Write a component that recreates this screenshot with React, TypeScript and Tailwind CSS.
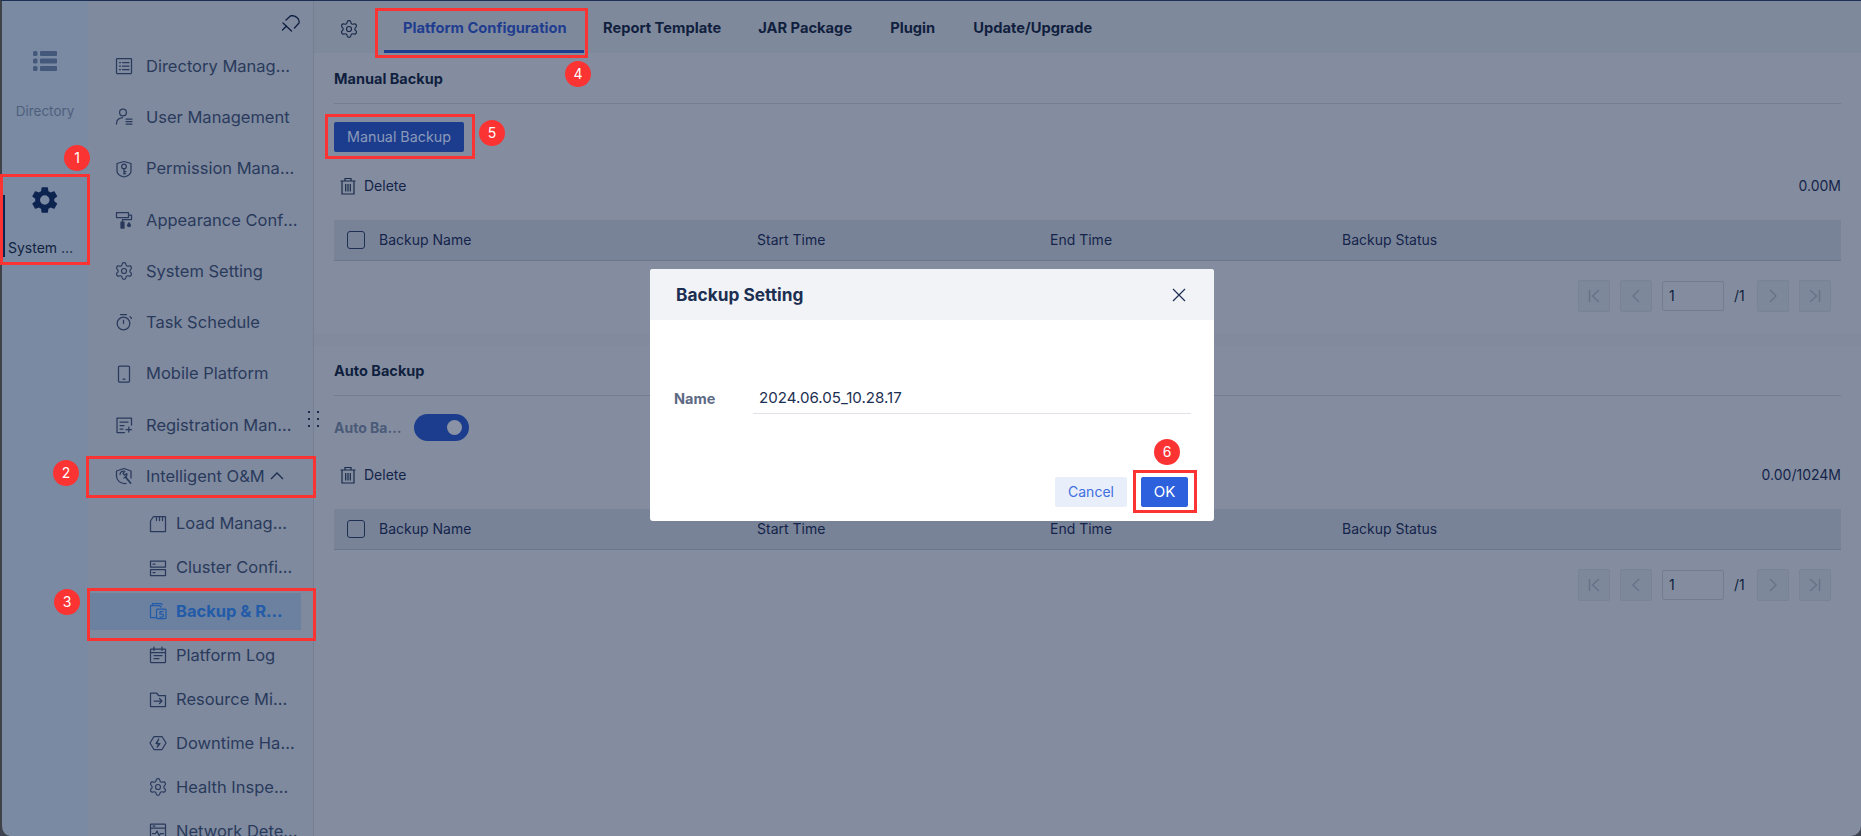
import React from 'react';
import { Settings } from 'lucide-react';

type IconProps = { className?: string };

const Svg: React.FC<{ className?: string; size?: number; children: React.ReactNode }> = ({ className, size = 18, children }) => (
    <svg width={size} height={size} viewBox="0 0 18 18" fill="none" stroke="currentColor" strokeWidth="1.25" strokeLinecap="round" strokeLinejoin="round" className={className}>
        {children}
    </svg>
);

const DirectoryIcon = () => (
    <Svg><rect x="1.500" y="1.500" width="15" height="15" rx="0.5" /><path d="M4.500 5.500h1M7.500 5.500h6.500M4.500 9h1M7.500 9h6.500M4.500 12.500h1M7.500 12.500h6.500" /></Svg>
);
const UserIcon = () => (
    <Svg><circle cx="8" cy="4.500" r="3.400" /><path d="M1.500 16c0-3.400 2.200-6 6-6.300M11 11h6M11 13.500h6M11 16h6" /></Svg>
);
const PermissionIcon = () => (
    <Svg><path d="M9 1.500l7 2v7.500c0 2.500-3 5-7 6-4-1-7-3.500-7-6V3.500z" /><circle cx="9" cy="6.500" r="2.300" /><path d="M9 9v5M9 11.500h2M9 13.500h1.500" /></Svg>
);
const AppearanceIcon = () => (
    <Svg><path d="M1.500 1.500h12v5h-12zM13.500 4h3v4.500H7.500V11" /><path d="M6 11h3v6H6z" fill="currentColor" /><path d="M14 11c1.500 1.700 2 2.500 2 3.200a2 2 0 0 1-4 0c0-.7.500-1.500 2-3.200z" fill="currentColor" stroke="none" /></Svg>
);
const GearIcon = () => <Settings size={20} strokeWidth={1.4} className="-m-px" />;
const TaskIcon = () => (
    <Svg><circle cx="8.500" cy="10.500" r="6.300" /><path d="M5.500 1.500h6M8.500 7v3.500M15 3.800l1.500 1.500" /></Svg>
);
const MobileIcon = () => (
    <Svg><rect x="3.500" y="1" width="11" height="16" rx="1" /><path d="M8 14h2" /></Svg>
);
const RegistrationIcon = () => (
    <Svg><path d="M16.500 9V2H2v14.500h7.500" /><path d="M5 6h8M5 9.500h4M5 13h3M11 13.500h5.500M13.800 11v5" /></Svg>
);
const OmIcon = () => (
    <Svg><path d="M11 16.500C5.500 17 1.500 13.500 1.500 9V4L9 1.500 16 4v7" /><path d="M5 7.500a3.500 3.500 0 0 1 4.800-3.200L8 6.500 9.700 8.200l2.100-1.700A3.500 3.500 0 0 1 8.800 11" /><path d="M10.500 10l5 6" strokeWidth="1.800" /></Svg>
);
const LoadIcon = () => (
    <Svg><path d="M4.500 1.500h12v15H1.500V6z" /><path d="M7.500 1.800v3.700M10.500 1.800v3.700M13.500 1.800v3.700" /></Svg>
);
const ClusterIcon = () => (
    <Svg><rect x="1.500" y="2" width="15" height="6" /><rect x="1.500" y="10.500" width="15" height="6" /><path d="M4 5h2M4 13.500h2" /></Svg>
);
const BackupIcon = () => (
    <Svg><path d="M13 2.500l-1-1H3.500v2M1.500 3.500h9l1.500 1.500M1.500 3.500V15.500h5" /><rect x="7.500" y="7" width="9.500" height="9.500" rx="1" /><path d="M14 9.500h-3v2.500h2a1.500 1.500 0 0 1 0 3h-2" /></Svg>
);
const LogIcon = () => (
    <Svg><rect x="1.500" y="3" width="15" height="13.500" rx="0.5" /><path d="M5 1v3.500M13 1v3.500M1.500 6.500h15M5 9.500h8M5 12.500h5" /></Svg>
);
const ResourceIcon = () => (
    <Svg><path d="M1.500 3h6l2 2.500h7v11h-15z" /><path d="M5 11h8M10.500 8.500L13 11l-2.500 2.500" /></Svg>
);
const DowntimeIcon = () => (
    <Svg><path d="M5 2.500h8L17 9l-4 6.500H5L1 9z" /><path d="M9.800 5L7 9.500h4L8.200 13" fill="currentColor" /></Svg>
);
const NetworkIcon = () => (
    <Svg><rect x="1.500" y="2" width="15" height="14" rx="0.5" /><path d="M1.500 6h15M4 4h2M3.500 11.500h3l1.500-2.500 2 4.500 1.500-2h3" /></Svg>
);
const PinIcon = () => (
    <svg width="18" height="18" viewBox="0 0 18 18" fill="none" stroke="#0f2040" strokeWidth="1.300" strokeLinejoin="round" strokeLinecap="round">
        <path d="M1 8l8.500 8M4 5l5-4.500C14 .5 18 4 17 8l-4.500 5M.5 15l4-4" />
    </svg>
);
const TrashIcon: React.FC<IconProps> = () => (
    <svg width="18" height="18" viewBox="0 0 18 18" fill="none" stroke="#1a2a4a" strokeWidth="1.200">
        <path d="M1.500 4h15M6 4V1.500h6V4M3 4.500V17h12V4.500M6.700 7v7.500M9 7v7.500M11.300 7v7.500" />
    </svg>
);
const SolidGear: React.FC<{ size: number }> = ({ size }) => (
    <svg width={size} height={size} viewBox="0 0 24 24" fill="#0d2350" fillRule="evenodd">
        <path d="M19.400 13c.04-.33.06-.66.06-1s-.02-.67-.06-1l2.160-1.650a.5.5 0 0 0 .12-.64l-2.050-3.540a.5.5 0 0 0-.62-.22l-2.550 1.020a7.500 7.500 0 0 0-1.730-1L14.350 2.260A.5.5 0 0 0 13.850 1.800h-4.100a.5.500 0 0 0-.5.46L8.870 4.970a7.500 7.500 0 0 0-1.730 1L4.590 4.950a.5.5 0 0 0-.62.22L1.920 8.710a.5.500 0 0 0 .12.64L4.200 11c-.04.33-.06.66-.06 1s.02.67.06 1l-2.160 1.650a.5.500 0 0 0-.12.64l2.050 3.540c.13.22.39.31.62.22l2.550-1.020c.53.4 1.110.74 1.730 1l.38 2.710c.04.26.25.46.5.46h4.100c.25 0 .46-.2.5-.46l.38-2.710a7.500 7.500 0 0 0 1.730-1l2.550 1.020c.23.09.49 0 .62-.22l2.050-3.540a.5.500 0 0 0-.12-.64zM11.800 15.800a3.800 3.800 0 1 1 0-7.600 3.800 3.800 0 0 1 0 7.600z" />
    </svg>
);
const ListIcon = () => (
    <svg width="24" height="20" viewBox="0 0 24 20" fill="#44587c">
        <rect x="0" y="0" width="4.500" height="5" rx="1.500" />
        <rect x="0" y="7.500" width="4.500" height="5" rx="1.500" />
        <rect x="0" y="15" width="4.500" height="5" rx="1.500" />
        <rect x="7" y="0" width="17" height="5" rx="1" />
        <rect x="7" y="7.500" width="17" height="5" rx="1" />
        <rect x="7" y="15" width="17" height="5" rx="1" />
    </svg>
);

const topNav = [
    { label: 'Directory Management', icon: <DirectoryIcon /> },
    { label: 'User Management', icon: <UserIcon /> },
    { label: 'Permission Management', icon: <PermissionIcon /> },
    { label: 'Appearance Configuration', icon: <AppearanceIcon /> },
    { label: 'System Setting', icon: <GearIcon /> },
    { label: 'Task Schedule', icon: <TaskIcon /> },
    { label: 'Mobile Platform', icon: <MobileIcon /> },
    { label: 'Registration Management', icon: <RegistrationIcon /> },
];

const subNav = [
    { label: 'Load Management', icon: <LoadIcon />, width: 'w-[118px]' },
    { label: 'Cluster Configuration', icon: <ClusterIcon />, width: 'w-[122px]' },
    { label: 'Backup & Restore', icon: <BackupIcon />, width: 'w-[116px]', active: true },
    { label: 'Platform Log', icon: <LogIcon />, width: 'w-[122px]' },
    { label: 'Resource Migration', icon: <ResourceIcon />, width: 'w-[118px]' },
    { label: 'Downtime Handling', icon: <DowntimeIcon />, width: 'w-[122px]' },
    { label: 'Health Inspection', icon: <GearIcon />, width: 'w-[118px]' },
    { label: 'Network Detection', icon: <NetworkIcon />, width: 'w-[122px]' },
];

const PageButton: React.FC<{ d: string }> = ({ d }) => (
    <div className="w-8 h-8 rounded-[2px] border border-[#798397] bg-[#7e889b] flex items-center justify-center">
        <svg width="16" height="16" viewBox="0 0 16 16" fill="none" stroke="#67728a" strokeWidth="1.400">
            <path d={d} />
        </svg>
    </div>
);

const Pagination = () => (
    <div className="flex items-center justify-end mt-[19px] h-8 pr-[10px]">
        <PageButton d="M3.500 2v12M13 2L6.500 8l6.500 6" />
        <div className="ml-[10px]"><PageButton d="M11 2L5 8l6 6" /></div>
        <div className="ml-[10px] w-[62px] h-[30px] rounded-[2px] border border-[#727d92] flex items-center pl-[6px] text-sm text-[#101f3e]">1</div>
        <span className="ml-[10px] w-[23px] text-sm text-[#101f3e]">/1</span>
        <PageButton d="M5 2l6 6-6 6" />
        <div className="ml-[10px]"><PageButton d="M12.500 2v12M3 2l6.500 6L3 14" /></div>
    </div>
);

const BackupTable = () => (
    <div className="flex items-center h-[41px] mt-6 bg-[#788398] border-b border-[#6b768c] text-sm text-[#14244a]">
        <span className="ml-[13px] w-[18px] h-[18px] rounded-[3px] border border-[#1e2f52]" />
        <span className="ml-[14px] w-[378px]">Backup Name</span>
        <span className="w-[293px]">Start Time</span>
        <span className="w-[292px]">End Time</span>
        <span>Backup Status</span>
    </div>
);

const DeleteRow: React.FC<{ quota: string }> = ({ quota }) => (
    <div className="flex items-center justify-between mt-6 h-5 text-sm text-[#14244a]">
        <span className="flex items-center gap-[7px] pl-[5px]"><TrashIcon />Delete</span>
        <span>{quota}</span>
    </div>
);

const Badge: React.FC<{ n: number; className: string }> = ({ n, className }) => (
    <span className={`absolute w-[26px] h-[26px] rounded-full bg-[#fb3333] text-white text-sm flex items-center justify-center ${className}`}>{n}</span>
);

const Mark: React.FC<{ className: string }> = ({ className }) => (
    <span className={`absolute border-[3px] border-[#fb3333] ${className}`} />
);

const App: React.FC = () => {
    return (
        <div className="relative w-[1861px] h-[836px] overflow-hidden bg-[#3d4350] [font-family:Inter,sans-serif]">
            <div className="flex h-full border-t border-t-[#1c2f55] border-l-[2px] border-l-[#3f4247] rounded-b-[10px] overflow-hidden">
                {/* rail */}
                <div className="w-[86px] shrink-0 bg-[#7a8aa2] flex flex-col items-center relative">
                    <div className="mt-[50px] h-5"><ListIcon /></div>
                    <span className="mt-[30px] text-[13.5px] leading-5 text-[#4e5f7e]">Directory</span>
                    <div className="mt-[64px] h-[30px]"><SolidGear size={30} /></div>
                    <span className="mt-[23px] mr-[6px] text-sm leading-5 text-[#11223f] w-[68px] truncate">System Management</span>
                    <span className="absolute left-[1px] top-[194px] w-[2px] h-[62px] bg-[#0d2350]" />
                </div>
                {/* nav */}
                <div className="w-[226px] shrink-0 bg-[#7f8a9e] border-r border-r-[#747f94] overflow-hidden">
                    <div className="h-[39.500px] flex justify-end pr-[13px] pt-[14px]"><PinIcon /></div>
                    {topNav.map(item => (
                        <div key={item.label} className="h-[51.250px] flex items-center pl-[27px] text-[16.5px] text-[#2a3a5c]">
                            <span className="w-[18px] shrink-0">{item.icon}</span>
                            <span className="ml-[13px] w-[152px] truncate">{item.label}</span>
                        </div>
                    ))}
                    <div className="h-[51.250px] flex items-center pl-[27px] text-[16.5px] text-[#2a3a5c]">
                        <OmIcon />
                        <span className="ml-[13px]">Intelligent O&amp;M</span>
                        <svg className="ml-[5px]" width="14" height="14" viewBox="0 0 14 14" fill="none" stroke="#1c2c4c" strokeWidth="1.300"><path d="M1 10l6-6 6 6" /></svg>
                    </div>
                    {subNav.map(item => (
                        <div key={item.label} className="h-[43.900px] flex items-center">
                            <div className={`w-[211px] h-[37px] ml-[2px] flex items-center pl-[59px] text-[16.5px] ${item.active ? 'bg-[#6c80a0] text-[#225ba8] font-bold' : 'text-[#2a3a5c]'}`}>
                                <span className="w-[18px] shrink-0">{item.icon}</span>
                                <span className={`ml-[9px] truncate ${item.width}`}>{item.label}</span>
                            </div>
                        </div>
                    ))}
                </div>
                {/* main */}
                <div className="flex-1 min-w-0 bg-[#848d9f] overflow-hidden">
                    <div className="h-[52px] pt-[3px] bg-[#7f899c] flex items-center text-[14.700px] font-bold text-[#101f3e]">
                        <span className="ml-[26px] text-[#1a2a4a]"><GearIcon /></span>
                        <div className="ml-[26px] h-full w-[200px] relative flex items-center pl-[19px] text-[#1f3d8f]">
                            Platform Configuration
                            <span className="absolute left-0 right-0 bottom-0 h-[3px] bg-[#1c3d8e]" />
                        </div>
                        <span className="ml-[19px]">Report Template</span>
                        <span className="ml-[37px]">JAR Package</span>
                        <span className="ml-[38px]">Plugin</span>
                        <span className="ml-[38px]">Update/Upgrade</span>
                    </div>
                    <div className="pl-[20px] pr-[20px]">
                        <div className="h-[51px] pt-[2px] flex items-center border-b border-b-[#747e92] text-[14.500px] font-bold text-[#101f3e]">Manual Backup</div>
                        <button className="mt-[18px] w-[130px] h-[30px] rounded-[2px] bg-[#1c3d8e] text-[14.300px] text-[#8b9ab9] flex items-center justify-center">Manual Backup</button>
                        <DeleteRow quota="0.00M" />
                        <BackupTable />
                        <Pagination />
                    </div>
                    <div className="h-[13px] mt-[21px] bg-[#818b9d]" />
                    <div className="pl-[20px] pr-[20px]">
                        <div className="h-[50px] flex items-center border-b border-b-[#747e92] text-[14.500px] font-bold text-[#101f3e]">Auto Backup</div>
                        <div className="mt-[18px] h-[27px] flex items-center text-sm font-bold text-[#4a5a78]">
                            <span className="w-[72px] truncate">Auto Backup</span>
                            <span className="ml-[8px] w-[55px] h-[27px] rounded-full bg-[#1c3d8e] relative">
                                <span className="absolute right-[7px] top-[6px] w-[15px] h-[15px] rounded-full bg-[#8a93a5]" />
                            </span>
                        </div>
                        <DeleteRow quota="0.00/1024M" />
                        <BackupTable />
                        <Pagination />
                    </div>
                </div>
            </div>

            {/* drag handle */}
            <div className="absolute left-[308px] top-[411px] grid grid-cols-2 gap-x-[7px] gap-y-[5px]">
                {[0, 1, 2, 3, 4, 5].map(i => <span key={i} className="w-[2px] h-[2px] bg-[#1c2c4c]" />)}
            </div>

            {/* modal */}
            <div className="absolute left-[650px] top-[269px] w-[564px] h-[252px] bg-white rounded-[3px] overflow-hidden">
                <div className="h-[51px] bg-[#f2f3f7] flex items-center justify-between pl-[26px] pr-[28px]">
                    <span className="text-[17.300px] font-bold text-[#1c2f52]">Backup Setting</span>
                    <svg width="14" height="14" viewBox="0 0 14 14" fill="none" stroke="#1c2f52" strokeWidth="1.200"><path d="M1 1l12 12M13 1L1 13" /></svg>
                </div>
                <div className="flex h-[38px] mt-[56px] pl-[24px]">
                    <span className="w-[79px] pt-[8px] h-[38px] flex items-center text-[14.500px] font-bold text-[#5c6a84]">Name</span>
                    <span className="w-[438px] h-[38px] flex items-center pt-[8px] pl-[6px] border-b border-b-[#dfe1e8] text-[15.100px] text-[#1c2f52]">2024.06.05_10.28.17</span>
                </div>
                <div className="flex justify-end gap-[14px] mt-[63px] pr-[26px]">
                    <button className="w-[72px] h-[30px] rounded-[2px] bg-[#e9eefb] text-sm text-[#3f6fe0]">Cancel</button>
                    <button className="w-[47px] h-[30px] rounded-[2px] bg-[#2c60dd] text-[15px] text-white">OK</button>
                </div>
            </div>

            {/* annotations */}
            <Mark className="left-0 top-[174px] w-[90px] h-[91px]" />
            <Mark className="left-[86px] top-[456px] w-[230px] h-[42px]" />
            <Mark className="left-[87px] top-[588px] w-[229px] h-[53px]" />
            <Mark className="left-[375px] top-[8px] w-[213px] h-[50px]" />
            <Mark className="left-[325px] top-[114px] w-[150px] h-[45px]" />
            <Mark className="left-[1133px] top-[470px] w-[64px] h-[43px]" />
            <Badge n={1} className="left-[64px] top-[145px]" />
            <Badge n={2} className="left-[53px] top-[460px]" />
            <Badge n={3} className="left-[54px] top-[589px]" />
            <Badge n={4} className="left-[565px] top-[61px]" />
            <Badge n={5} className="left-[479px] top-[120px]" />
            <Badge n={6} className="left-[1154px] top-[439px]" />
        </div>
    );
};

export default App;
